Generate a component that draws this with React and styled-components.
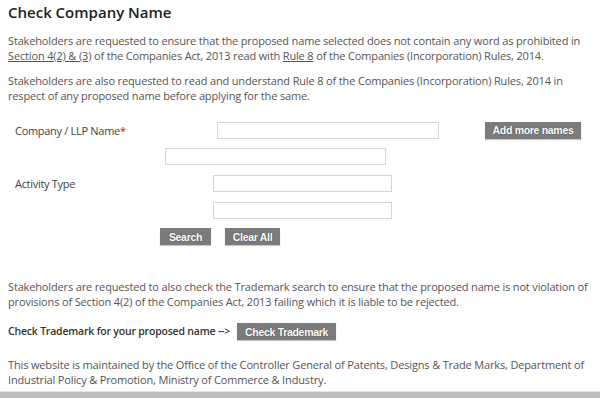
import React from "react";
import styled, { createGlobalStyle } from "styled-components";

const Global = createGlobalStyle`
  html, body { margin: 0; padding: 0; background: #fff; }
  body { font-family: "Open Sans", "Noto Sans", sans-serif; }
`;

const Page = styled.div`
  width: 600px;
  height: 398px;
  display: flex;
  flex-direction: column;
  overflow: hidden;
`;

const Content = styled.div`
  flex: 1;
  padding: 0 8px;
  color: #555;
  font-size: 11px;
  line-height: 15px;
`;

const Title = styled.h2`
  margin: 0;
  padding-top: 1px;
  font-size: 15px;
  line-height: 22px;
  font-weight: 600;
  color: #222;
`;

const Para = styled.p`
  margin: ${(p) => p.$mt || 0}px 0 0;
  letter-spacing: -0.15px;
`;

const Link = styled.span`
  text-decoration: underline;
  color: #555;
`;

const Form = styled.div`
  margin-top: ${(p) => p.$mt}px;
  display: flex;
  flex-direction: column;
`;

const Row = styled.div`
  display: flex;
  align-items: center;
  height: ${(p) => p.$h || 27}px;
`;

const Label = styled.div`
  width: ${(p) => p.$w}px;
  padding-left: 7px;
  box-sizing: border-box;
  color: #444;
  font-size: 11px;
  letter-spacing: -0.3px;
  flex: none;
`;

const Req = styled.span`
  color: #e00;
`;

const Input = styled.div`
  margin-left: ${(p) => p.$ml || 0}px;
  width: ${(p) => p.$w}px;
  height: 17px;
  box-sizing: border-box;
  border: 1px solid #d6d6d6;
  background: #fff;
  flex: none;
`;

const Button = styled.button`
  margin-left: ${(p) => p.$ml || 0}px;
  width: ${(p) => p.$w}px;
  height: 17px;
  padding: 0;
  border: none;
  background: #7b7b7b;
  color: #fff;
  font-family: "Liberation Sans", Arial, sans-serif;
  font-weight: bold;
  font-size: 10.5px;
  letter-spacing: -0.3px;
  text-shadow: 0 0 1px #333;
  box-shadow: 0 1px 1px #c8c8c8;
  flex: none;
  cursor: pointer;
`;

const TrademarkRow = styled.div`
  margin-top: 14px;
  display: flex;
  align-items: center;
  height: 17px;
`;

const Bold = styled.span`
  font-weight: 600;
  color: #333;
  font-size: 10.5px;
  letter-spacing: -0.2px;
`;

const Bottom = styled.div`
  height: 6px;
  background: #bdbdbd;
  border-top: 1px solid #e4e4e4;
  flex: none;
`;

export default function App() {
  return (
    <>
      <Global />
      <Page>
        <Content>
          <Title>Check Company Name</Title>
          <Para $mt={10}>
            Stakeholders are requested to ensure that the proposed name selected does not contain any word as prohibited in{" "}
            <Link>Section 4(2) &amp; (3)</Link> of the Companies Act, 2013 read with <Link>Rule 8</Link> of the Companies (Incorporation) Rules, 2014.
          </Para>
          <Para $mt={10}>
            Stakeholders are also requested to read and understand Rule 8 of the Companies (Incorporation) Rules, 2014 in respect of any proposed name before applying for the same.
          </Para>
          <Form $mt={14}>
            <Row $h={26}>
              <Label $w={209}>
                Company / LLP Name<Req>*</Req>
              </Label>
              <Input $w={222} />
              <Button $ml={46} $w={96}>Add more names</Button>
            </Row>
            <Row>
              <Label $w={157} />
              <Input $w={221} />
            </Row>
            <Row>
              <Label $w={205}>Activity Type</Label>
              <Input $w={179} />
            </Row>
            <Row $h={26}>
              <Label $w={205} />
              <Input $w={179} />
            </Row>
            <Row>
              <Label $w={152} />
              <Button $w={51}>Search</Button>
              <Button $ml={14} $w={55}>Clear All</Button>
            </Row>
          </Form>
          <Para $mt={29}>
            Stakeholders are requested to also check the Trademark search to ensure that the proposed name is not violation of provisions of Section 4(2) of the Companies Act, 2013 failing which it is liable to be rejected.
          </Para>
          <TrademarkRow>
            <Bold>Check Trademark for your proposed name --&gt;</Bold>
            <Button $ml={7} $w={99}>Check Trademark</Button>
          </TrademarkRow>
          <Para $mt={17}>
            This website is maintained by the Office of the Controller General of Patents, Designs &amp; Trade Marks, Department of Industrial Policy &amp; Promotion, Ministry of Commerce &amp; Industry.
          </Para>
        </Content>
        <Bottom />
      </Page>
    </>
  );
}
